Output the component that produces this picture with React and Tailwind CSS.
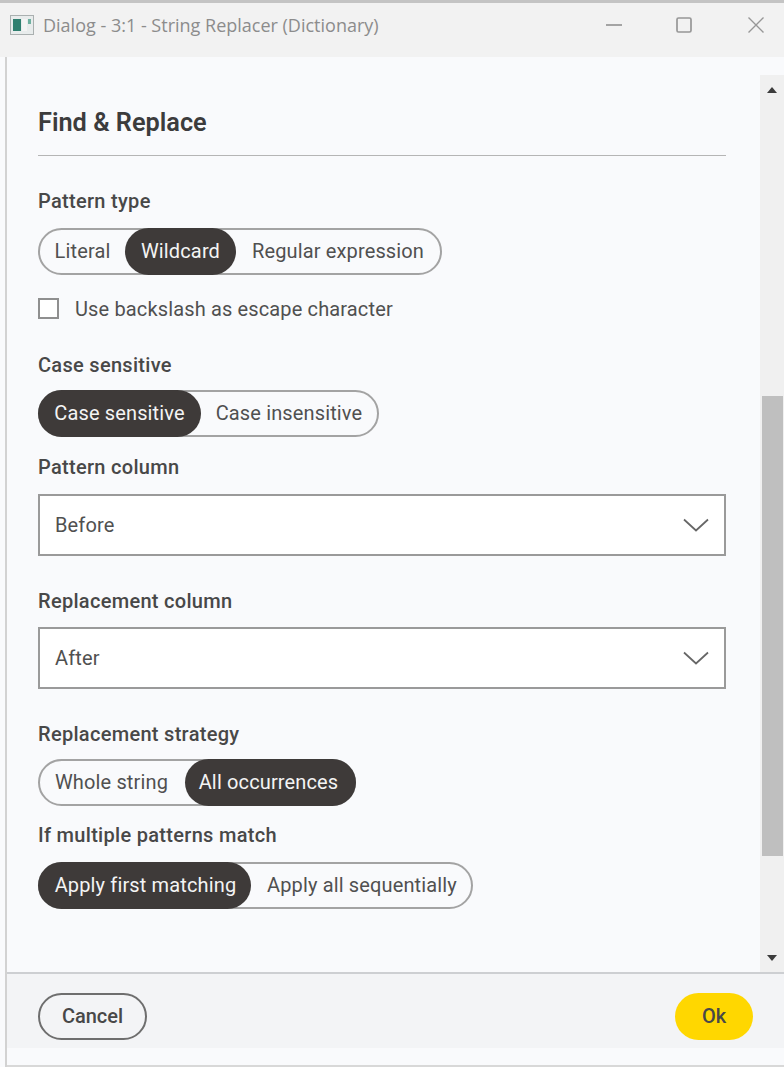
function Segmented({ options, active }) {
  return (
    <div className="inline-flex h-[47px] self-start rounded-full border-2 border-[#a3a3a3] bg-[#f9fafc]">
      {options.map((opt) => (
        <div
          key={opt.label}
          className={`flex items-center justify-center rounded-full pb-[2px] ${opt.w} ${
            opt.label === active ? "-m-[2px] h-[47px] bg-[#3e3a39] text-[#f4f4f4]" : "text-[#505050]"
          }`}
        >
          {opt.label}
        </div>
      ))}
    </div>
  );
}

function Label({ children, className }) {
  return (
    <div className={`h-[24px] text-[20px] leading-[24px] font-medium tracking-[0.3px] text-[#484848] ${className}`}>
      {children}
    </div>
  );
}

function Select({ value }) {
  return (
    <div className="flex h-[62px] items-center justify-between border-2 border-[#9a9a9a] bg-white pr-[15px] pl-[15px] text-[#505050]">
      <span>{value}</span>
      <svg width="26" height="14" viewBox="0 0 26 14" fill="none" stroke="#666" strokeWidth="1.7">
        <path d="M1 1.5 13 12.5 25 1.5" />
      </svg>
    </div>
  );
}

export default function App() {
  return (
    <div className="flex h-[1067px] w-[784px] flex-col overflow-hidden bg-[#f9fafc] font-['Roboto',sans-serif] text-[20px] tracking-[0.14px]">
      <div className="flex h-[57px] shrink-0 items-center justify-between border-t-[3px] border-[#c4c4c4] bg-[#f2f2f2] pr-[20px] pb-[10px] pl-[10px]">
        <div className="flex items-center gap-[9px]">
          <svg width="24" height="20" viewBox="0 0 24 20">
            <rect x="0.5" y="0.5" width="23" height="19" fill="#e8ecec" stroke="#aab0b0" />
            <rect x="3" y="4" width="8" height="12" fill="#2f7f6f" />
            <rect x="12" y="4" width="5" height="12" fill="#f4f4f4" />
            <rect x="18" y="4" width="3" height="5" fill="#6fb0a0" />
          </svg>
          <span className="font-['Open_Sans',sans-serif] text-[18px] tracking-normal text-[#8c8c8c]">
            Dialog - 3:1 - String Replacer (Dictionary)
          </span>
        </div>
        <div className="flex items-center">
          <svg width="16" height="16" viewBox="0 0 16 16" fill="none" stroke="#979797" strokeWidth="1.7">
            <path d="M0 8H16" />
          </svg>
          <svg className="ml-[54px]" width="16" height="16" viewBox="0 0 16 16" fill="none" stroke="#979797" strokeWidth="1.7">
            <rect x="1" y="1" width="14" height="14" rx="1.5" />
          </svg>
          <svg className="ml-[56px]" width="16" height="16" viewBox="0 0 16 16" fill="none" stroke="#979797" strokeWidth="1.4">
            <path d="M0.5 0.5 15.5 15.5M15.5 0.5 0.5 15.5" />
          </svg>
        </div>
      </div>

      <div className="ml-[5px] flex min-h-0 flex-1 flex-col border-l-2 border-[#d2d2d2]">
        <div className="flex h-[917px] shrink-0 border-b-2 border-[#cdcfd2]">
          <div className="flex flex-1 flex-col pr-[34px] pl-[31px]">
            <h1 className="mt-[50px] h-[32px] text-[25.3px] leading-[32px] font-semibold tracking-normal text-[#3c3c3c]">
              Find &amp; Replace
            </h1>
            <div className="mt-[16px] h-px shrink-0 bg-[#b5b5b5]" />
            <Label className="mt-[33px] mb-[15px]">Pattern type</Label>
            <Segmented
              active="Wildcard"
              options={[
                { label: "Literal", w: "w-[87px] pr-[2px]" },
                { label: "Wildcard", w: "w-[111px]" },
                { label: "Regular expression", w: "w-[206px] pl-[2px]" },
              ]}
            />
            <div className="mt-[23px] flex h-[21px] items-center gap-[16px] text-[#505050]">
              <div className="h-[21px] w-[21px] border-2 border-[#8f8f8f] bg-white" />
              <span>Use backslash as escape character</span>
            </div>
            <Label className="mt-[34px] mb-[13px]">Case sensitive</Label>
            <Segmented
              active="Case sensitive"
              options={[
                { label: "Case sensitive", w: "w-[163px]" },
                { label: "Case insensitive", w: "w-[178px] pl-[2px]" },
              ]}
            />
            <Label className="mt-[18px] mb-[15px]">Pattern column</Label>
            <Select value="Before" />
            <Label className="mt-[33px] mb-[14px]">Replacement column</Label>
            <Select value="After" />
            <Label className="mt-[33px] mb-[13px]">Replacement strategy</Label>
            <Segmented
              active="All occurrences"
              options={[
                { label: "Whole string", w: "w-[147px] pr-[4px]" },
                { label: "All occurrences", w: "w-[171px] pr-[4px]" },
              ]}
            />
            <Label className="mt-[17px] mb-[15px]">If multiple patterns match</Label>
            <Segmented
              active="Apply first matching"
              options={[
                { label: "Apply first matching", w: "w-[213px] pl-[2px]" },
                { label: "Apply all sequentially", w: "w-[222px] pl-[4px]" },
              ]}
            />
          </div>

          <div className="mt-[18px] flex w-[24px] shrink-0 flex-col items-center bg-[#f0f0f0]">
            <div className="flex h-[30px] w-full shrink-0 items-center justify-center">
              <div className="h-0 w-0 border-x-[5px] border-b-[6px] border-x-transparent border-b-[#3c3c3c]" />
            </div>
            <div className="mt-[291px] h-[460px] w-[21px] shrink-0 bg-[#bfbfbf]" />
            <div className="mt-[87px] flex h-[30px] w-full shrink-0 items-center justify-center">
              <div className="h-0 w-0 border-x-[5px] border-t-[6px] border-x-transparent border-t-[#3c3c3c]" />
            </div>
          </div>
        </div>

        <div className="flex h-[74px] shrink-0 items-start justify-between bg-[#f3f4f6] pt-[19px] pr-[31px] pl-[31px] font-medium tracking-normal">
          <div className="flex h-[47px] w-[109px] items-center justify-center rounded-full border-2 border-[#6e6e6e] pb-[2px] text-[#484848]">
            Cancel
          </div>
          <div className="flex h-[47px] w-[78px] items-center justify-center rounded-full bg-[#ffd700] pb-[2px] text-[#484848]">
            Ok
          </div>
        </div>
        <div className="flex-1 border-b-2 border-[#d8d8d8] bg-[#f9fafc]" />
      </div>
    </div>
  );
}
